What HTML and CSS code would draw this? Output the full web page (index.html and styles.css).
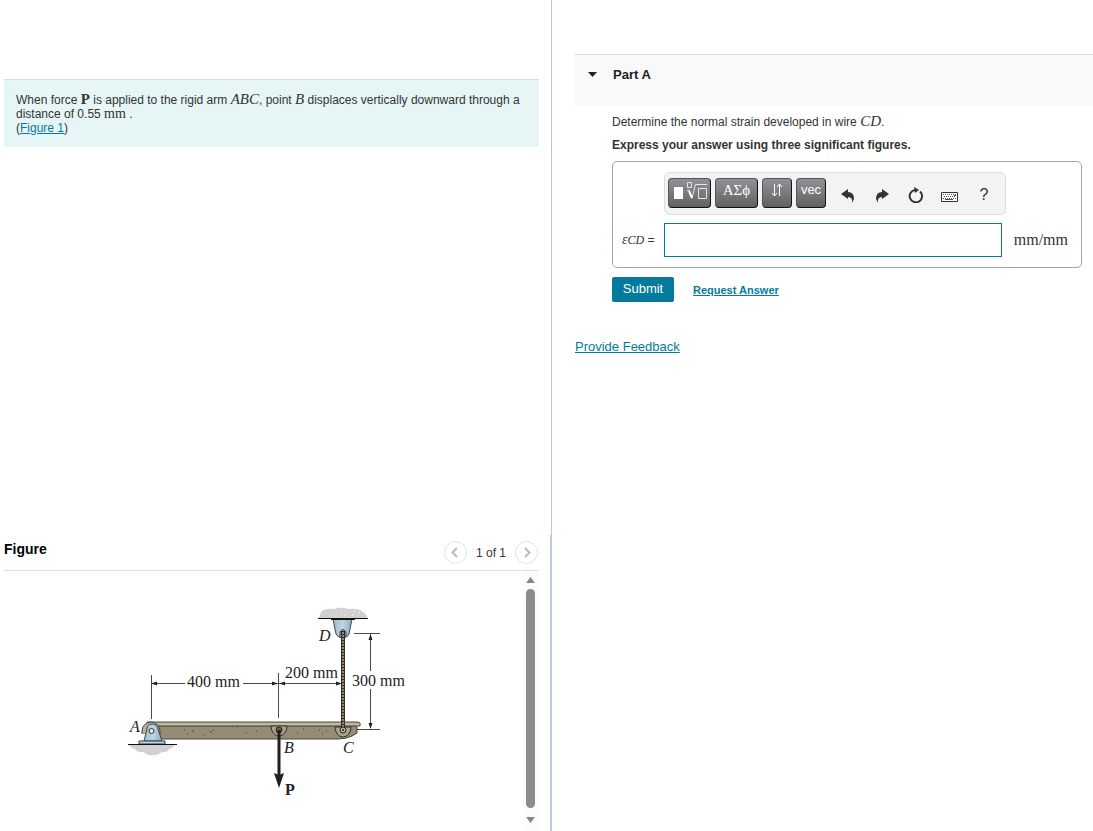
FILE: index.html
```html
<!DOCTYPE html>
<html lang="en">
<head>
<meta charset="utf-8">
<meta name="viewport" content="width=device-width, initial-scale=1">
<title>Part A</title>
<link rel="stylesheet" href="styles.css">
</head>
<body>
<div class="layout">
  <div class="left">
    <section class="problem">
      <div class="prompt">
        When force <b class="math">P</b> is applied to the rigid arm <i class="math">ABC</i>, point <i class="math">B</i> displaces vertically downward through a distance of 0.55 <span class="unit">mm</span> .<br>
        (<a href="#figure">Figure 1</a>)
      </div>
    </section>
    <section class="figure-pane" id="figure">
      <header class="figure-head">
        <h2>Figure</h2>
        <nav class="pager" aria-label="Figures">
          <button type="button" aria-label="Previous figure"><svg width="10" height="12" viewBox="0 0 10 12"><path d="M7 1L2.500 5.500L7 10"/></svg></button>
          <span>1 of 1</span>
          <button type="button" aria-label="Next figure"><svg width="10" height="12" viewBox="0 0 10 12"><path d="M3 1L7.500 5.500L3 10"/></svg></button>
        </nav>
      </header>
      <div class="figure-body">
        <svg class="diagram" width="300" height="205" viewBox="120 600 300 205" role="img" aria-label="Rigid arm ABC supported by wire CD">
          <defs>
            <linearGradient id="steel" x1="0" x2="1" y1="0" y2="0"><stop offset="0" stop-color="#9dbacb"/><stop offset=".5" stop-color="#bfd6e2"/><stop offset="1" stop-color="#8eacbd"/></linearGradient>
            <linearGradient id="flange" x1="0" x2="0" y1="0" y2="1"><stop offset="0" stop-color="#8d8874"/><stop offset=".45" stop-color="#c9c4b2"/><stop offset="1" stop-color="#a39c86"/></linearGradient>
          </defs>
          <path d="M129 745h45q2 1-5 4q-2 4-7 3q-4 4-9 3q-6 1-9-3q-6 1-9-3q-4-1-6-4z" fill="#d1d1d3"/>
          <path d="M319 618l2-6q4-4 12-3q9-3 15 0q11-1 15 3q4 2 4 6z" fill="#d1d1d3"/>
          <path d="M341 611h1M352 615h1M354 611h1M359 613h1M345 615h1" stroke="#fff"/>
          <path d="M146 726H357V733L352 736Q346 739 338 739H146Z" fill="#968b74" stroke="#4b463a"/>
          <path d="M147 726V722H358Q361 722 360 726Z" fill="url(#flange)" stroke="#5b574b"/>
          <path d="M184 730h1M192 731h2M187 734h1M210 732h2M213 730h1M237 727h1M246 733h1M256 731h1M203 735h1M297 733h1M303 729h1M319 730h1M322 734h1M326 731h1" stroke="#4b4231"/>
          <path d="M142 734V731A9 9 0 0 1 160 731V734" fill="#b7b09b" stroke="#444"/>
          <path d="M144 741L147 729Q147 724 152 724Q157 724 158 729L162 741Z" fill="url(#steel)" stroke="#3c4b54"/>
          <path d="M139 741H165V744H139Z" fill="#b8d0dd" stroke="#33424c"/>
          <circle cx="151.500" cy="731" r="2.500" fill="#e2e5e6" stroke="#333"/>
          <path d="M128 744.500H177" stroke="#111"/>
          <path d="M318 618.500H368" stroke="#111"/>
          <path d="M333 619H352L349 634Q347 638 343 638Q338 638 336 634Z" fill="url(#steel)" stroke="#3c4b54"/>
          <path d="M331 619H355" stroke="#111" stroke-width="2"/>
          <path d="M340 637V632Q343 627 346 632V637" fill="#8ca8b7" stroke="#3b4245"/>
          <path d="M271 726A8 10 0 0 0 287 726Z" fill="#aaa38e" stroke="#343027"/>
          <path d="M335 727A8 10 0 0 0 351 727Z" fill="#aaa38e" stroke="#343027"/>
          <circle cx="279" cy="730" r="3" fill="#67604f" stroke="#25221d"/>
          <path d="M343 631V729" stroke="#332d27" stroke-width="4"/>
          <path d="M343 632V729" stroke="#94866f" stroke-width="2" stroke-dasharray="2 1"/>
          <circle cx="343" cy="730" r="3" fill="#b6b1a4" stroke="#27231f"/>
          <circle cx="343" cy="730" r="1" fill="#222"/>
          <path d="M151.500 675V719M278.500 673V718M151 683.500H185M243 683.500H341M354 633.500H380M370.500 634V671M370.500 689V728M356 729.500H380" stroke="#4a4a4c" fill="none"/>
          <path d="M151 683.500l6-2v4zM278 683.500l-6-2v4zM279 683.500l6-2v4zM342 683.500l-6-2v4zM370.500 634l-2 6h4zM370.500 729l-2-6h4z" fill="#222"/>
          <path d="M279 730V776" stroke="#201e20" stroke-width="3"/>
          <path d="M279 788L274 773L279 775L284 773Z" fill="#201e20"/>
          <g class="label"><text x="187" y="687">400 mm</text><text x="285" y="678">200 mm</text><text x="352" y="686">300 mm</text></g>
          <g class="label point"><text x="130" y="732">A</text><text x="284" y="753">B</text><text x="343" y="753">C</text><text x="319" y="641">D</text></g>
          <text class="label force" x="285" y="795">P</text>
        </svg>
        <div class="scrollbar" aria-hidden="true">
          <svg width="9" height="6" viewBox="0 0 9 6"><path d="M0 6L4.500 0L9 6Z"/></svg>
          <div class="thumb"></div>
          <svg width="9" height="6" viewBox="0 0 9 6"><path d="M0 0H9L4.500 6Z"/></svg>
        </div>
      </div>
    </section>
  </div>
  <main class="right">
    <header class="part-head">
      <svg width="9" height="5" viewBox="0 0 9 5"><path d="M0 0H9L4.500 5Z" fill="#222"/></svg>
      <h2>Part A</h2>
    </header>
    <div class="part-body">
      <p>Determine the normal strain developed in wire <i class="math">CD</i>.</p>
      <p class="instructions">Express your answer using three significant figures.</p>
      <form class="answer" id="answer">
        <div class="toolbar">
          <button class="key key-wide templates" type="button" aria-label="Templates">
            <svg width="36" height="20" viewBox="0 0 36 20"><path d="M2 6h9v12H2z" fill="#fff"/><g fill="none" stroke="#e5e5e8"><path d="M15.500 1.500h4v5h-4zM26.500 7.500h8v10h-8z"/><path d="M15 10l2-1l3 8L23.500 3.500H35"/></g><path d="M17 10l3 7" stroke="#fff" stroke-width="2"/></svg>
          </button>
          <button class="key key-wide greek" type="button">ΑΣϕ</button>
          <button class="key" type="button" aria-label="Arrows"><svg width="14" height="14" viewBox="0 0 14 14"><path d="M4.500 1V13M2 10l2.500 3L7 10M9.500 13V1M7 4l2.500-3L12 4" fill="none" stroke="#fff"/></svg></button>
          <button class="key" type="button">vec</button>
          <div class="tools">
            <button type="button" aria-label="Undo"><svg width="16" height="16" viewBox="0 0 16 16"><path d="M1 7L8 2V5Q14 5 14 12L12 16Q13 10 8 10V12Z" fill="#333"/></svg></button>
            <button type="button" aria-label="Redo"><svg width="16" height="16" viewBox="0 0 16 16"><path d="M15 7L8 2V5Q2 5 2 12L4 16Q3 10 8 10V12Z" fill="#333"/></svg></button>
            <button type="button" aria-label="Reset"><svg width="16" height="16" viewBox="0 0 16 16"><path d="M12 4.500A6.200 6.200 0 1 1 7 3" fill="none" stroke="#333" stroke-width="2"/><path d="M6 0L11 3L7 6Z" fill="#333"/></svg></button>
            <button type="button" aria-label="Keyboard"><svg width="18" height="16" viewBox="0 0 18 16"><path d="M.5 5.500h16v9H.5z" fill="#fff" stroke="#333"/><path d="M2 7.500h13M3 9.500h12M2 11.500h13" stroke="#555" stroke-dasharray="1 1"/><path d="M4 12.500h8M13 8.500h2" stroke="#555"/></svg></button>
            <button type="button" aria-label="Help">?</button>
          </div>
        </div>
        <label for="strain"><i class="math small">ε<span class="subscript">CD</span></i> =</label>
        <input id="strain" type="text">
        <span class="answer-unit">mm/mm</span>
      </form>
      <div class="actions">
        <button class="submit" type="submit" form="answer">Submit</button>
        <a href="#answer">Request Answer</a>
      </div>
    </div>
    <a class="feedback" href="#feedback">Provide Feedback</a>
  </main>
</div>
</body>
</html>
```
FILE: styles.css
```css
* { box-sizing: border-box; }
body { margin: 0; font: 12px/14px "Liberation Sans", Arial, sans-serif; color: #333; background: #fff; }
h2, p { margin: 0; }
button { font: inherit; padding: 0; }
a { color: #047a9c; }
svg { display: block; }
.layout { display: grid; grid-template-columns: 552fr 541fr; min-height: 100vh; }
.left { display: flex; flex-direction: column; }
.problem { flex: 1; padding: 79px 12px 0 4px; border-right: 1px solid #bcc6d0; }
.prompt { padding: 13px 12px 12px; background: #e6f6f6; border-top: 1px solid #d9dddd; }
.math, .unit { font-family: "Liberation Serif", serif; font-size: 15px; line-height: 0; }
.unit { font-size: 14px; }

.figure-pane { display: flex; flex-direction: column; height: 296px; padding: 0 12px 0 4px; border-right: 2px solid #b9cbdf; }
.figure-head { display: flex; justify-content: space-between; height: 36px; border-bottom: 1px solid #ddd; }
.figure-head h2 { padding-top: 6px; font-size: 14px; line-height: 16px; color: #000; }
.pager { display: flex; align-items: center; gap: 9px; }
.pager button { display: grid; place-items: center; width: 23px; height: 23px; border: 1px solid #e3e3e3; border-radius: 50%; background: #fff; }
.pager path { fill: none; stroke: #bbb; stroke-width: 2; }
.figure-body { display: flex; flex: 1; justify-content: space-between; }
.diagram { margin: 29px 0 0 116px; }
.label { font-family: "Liberation Serif", serif; font-size: 16px; fill: #222; }
.point { font-style: italic; }
.force { font-weight: bold; }
.scrollbar { display: flex; flex-direction: column; align-items: center; gap: 6px; width: 15px; padding: 6px 0 8px; background: #fcfcfc; fill: #888; }
.thumb { flex: 1; width: 9px; margin-bottom: 3px; border-radius: 5px; background: #8b8b8b; }

.right { padding: 54px 0 0 23px; }
.part-head { display: flex; align-items: flex-start; gap: 16px; height: 52px; padding: 12px 13px; border-top: 1px solid #ddd; background: #f9f9f9; }
.part-head svg { margin-top: 5px; }
.part-head h2 { font-size: 13px; line-height: 15px; color: #222; }
.part-body { padding: 9px 11px 0 37px; }
.part-body p { margin-bottom: 9px; }
.instructions { font-weight: bold; }
.answer { display: grid; grid-template-columns: 42px 1fr auto; align-items: center; row-gap: 8px; padding: 10px 13px 10px 9px; border: 1px solid #a5a5a5; border-radius: 5px; }
.toolbar { grid-column: 2 / 4; justify-self: start; display: flex; gap: 4px; padding: 5px 4px 6px 3px; border: 1px solid #ddd; border-radius: 6px; background: #f3f3f3; }
.key { display: flex; justify-content: center; align-items: flex-start; width: 30px; height: 30px; padding-top: 4px; border: 1px solid; border-color: #555 #111 #111 #555; border-radius: 4px; background: linear-gradient(#92919a, #616161); color: #fff; font-size: 13px; }
.key-wide { width: 43px; }
.templates { padding-top: 2px; }
.greek { font-family: "Liberation Serif", serif; font-size: 15px; }
.tools { display: flex; align-items: center; gap: 10px; margin: 4px 5px 0 6px; }
.tools button { display: grid; place-items: center; width: 24px; height: 24px; border: 0; background: none; color: #333; font-size: 16px; }
.small { font-size: 14px; }
.subscript { font-size: 12px; }
.answer input { width: 100%; height: 34px; border: 1px solid #047a9c; background: #fff; }
.answer-unit { padding-left: 12px; font: 16px/18px "Liberation Serif", serif; }
.actions { display: flex; align-items: center; gap: 19px; padding-top: 9px; }
.submit { width: 62px; height: 25px; padding-bottom: 2px; border: 0; border-radius: 2px; background: #047a9c; color: #fff; font-size: 13px; }
.actions a { font-size: 11px; font-weight: bold; }
.feedback { display: inline-block; margin-top: 37px; font-size: 13px; line-height: 15px; }
```
